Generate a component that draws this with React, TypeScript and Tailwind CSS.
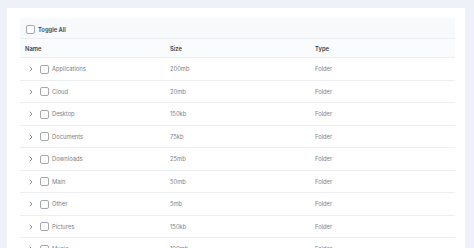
import React from 'react';

const rows = [
    { name: 'Applications', size: '200mb' },
    { name: 'Cloud', size: '20mb' },
    { name: 'Desktop', size: '150kb' },
    { name: 'Documents', size: '75kb' },
    { name: 'Downloads', size: '25mb' },
    { name: 'Main', size: '50mb' },
    { name: 'Other', size: '5mb' },
    { name: 'Pictures', size: '150kb' },
    { name: 'Music', size: '100mb' },
    { name: 'Videos', size: '2gb' },
];

const Box = () => (
    <span className="block w-[9px] h-[9px] rounded-[2px] border border-[#a3a8b1] bg-white shrink-0" />
);

const Chevron = () => (
    <svg width="6" height="6" viewBox="0 0 6 6" className="shrink-0">
        <path d="M2 1 L4 3 L2 5" fill="none" stroke="#6b7280" strokeWidth="0.8" strokeLinecap="round" strokeLinejoin="round" />
    </svg>
);

export default function App() {
    return (
        <div className="h-[248px] overflow-hidden bg-[#eef2f8] pt-[8px] pl-[7px] pr-[9px]" style={{ fontFamily: 'Inter, "Noto Sans", sans-serif' }}>
            <div className="bg-white h-[300px] pt-[10px] pl-[13px] pr-[10px]">
                {/* toggle bar */}
                <div className="h-[21px] bg-[#f8f9fb] border-b border-[#eceef2] flex items-center gap-[3px] pl-[6px] pt-[3px]">
                    <Box />
                    <span className="text-[5.8px] font-semibold text-[#374151] leading-none">Toggle All</span>
                </div>
                {/* header */}
                <div className="h-[19px] bg-[#fafbfc] border-b border-[#eceef2] grid grid-cols-[145px_145px_1fr] items-center pt-[2px] text-[5.8px] font-semibold text-[#374151] leading-none">
                    <span className="px-[5px]">Name</span>
                    <span className="px-[5px]">Size</span>
                    <span className="px-[5px]">Type</span>
                </div>
                {rows.map((r) => (
                    <div key={r.name} className="h-[22.5px] border-b border-[#eceef2] grid grid-cols-[145px_145px_1fr] items-center pt-[1px] text-[5.8px] text-[#7b808a] leading-none">
                        <div className="flex items-center pl-[8px]">
                            <Chevron />
                            <span className="ml-[6px]"><Box /></span>
                            <span className="ml-[3px]">{r.name}</span>
                        </div>
                        <span className="px-[5px]">{r.size}</span>
                        <span className="px-[5px]">Folder</span>
                    </div>
                ))}
            </div>
        </div>
    );
}
